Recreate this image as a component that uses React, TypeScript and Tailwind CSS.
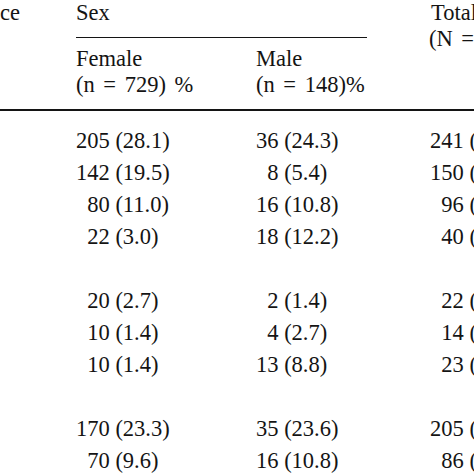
import React from 'react';

type Cell = [string, string] | null;

const rows: { female: Cell; male: Cell; total: Cell }[] = [
  { female: ['205', '(28.1)'], male: ['36', '(24.3)'], total: ['241', '(27.5)'] },
  { female: ['142', '(19.5)'], male: ['8', '(5.4)'], total: ['150', '(17.1)'] },
  { female: ['80', '(11.0)'], male: ['16', '(10.8)'], total: ['96', '(10.9)'] },
  { female: ['22', '(3.0)'], male: ['18', '(12.2)'], total: ['40', '(4.6)'] },
  { female: null, male: null, total: null },
  { female: ['20', '(2.7)'], male: ['2', '(1.4)'], total: ['22', '(2.5)'] },
  { female: ['10', '(1.4)'], male: ['4', '(2.7)'], total: ['14', '(1.6)'] },
  { female: ['10', '(1.4)'], male: ['13', '(8.8)'], total: ['23', '(2.6)'] },
  { female: null, male: null, total: null },
  { female: ['170', '(23.3)'], male: ['35', '(23.6)'], total: ['205', '(23.4)'] },
  { female: ['70', '(9.6)'], male: ['16', '(10.8)'], total: ['86', '(9.8)'] },
];

const Value: React.FC<{ cell: Cell; digits: 'w-[3ch]' | 'w-[2ch]' }> = ({ cell, digits }) => {
  if (!cell) return null;
  return (
    <>
      <span className={`inline-block text-right ${digits}`}>{cell[0]}</span> {cell[1]}
    </>
  );
};

export default function App() {
  return (
    <div
      className="w-[474px] h-[474px] overflow-hidden bg-white text-[#141414] text-[22.5px] leading-[26px] whitespace-nowrap"
      style={{ fontFamily: '"Liberation Serif", "Times New Roman", serif' }}
    >
      {/* header */}
      <div className="flex h-[111px] border-b-2 border-[#141414]">
        <div className="w-[76px] shrink-0">ce</div>
        <div className="w-[355px] shrink-0">
          <div>Sex</div>
          <div className="mt-[11px] w-[291px] border-t-[1.5px] border-[#141414]" />
          <div className="mt-[8px] flex [word-spacing:3px]">
            <div className="w-[180px] shrink-0">
              <div>Female</div>
              <div>(n = 729) %</div>
            </div>
            <div>
              <div>Male</div>
              <div>(n = 148)%</div>
            </div>
          </div>
        </div>
        <div className="[word-spacing:3px]">
          <div>Total</div>
          <div className="-ml-[2px]">(N = 877) %</div>
        </div>
      </div>

      {/* body */}
      <div className="pt-[14px]">
        {rows.map((r, i) => (
          <div key={i} className="flex h-[32px] leading-[32px]">
            <div className="w-[76px] shrink-0" />
            <div className="w-[180px] shrink-0">
              <Value cell={r.female} digits="w-[3ch]" />
            </div>
            <div className="w-[175px] shrink-0">
              <Value cell={r.male} digits="w-[2ch]" />
            </div>
            <div className="-ml-[1px]">
              <Value cell={r.total} digits="w-[3ch]" />
            </div>
          </div>
        ))}
      </div>
    </div>
  );
}
